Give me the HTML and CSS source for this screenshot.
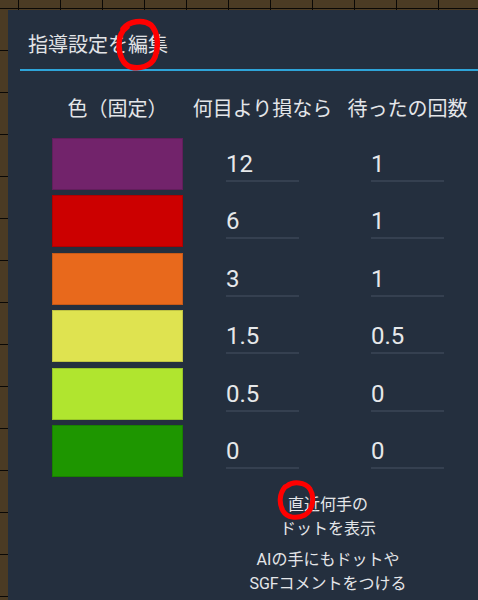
FILE: index.html
```html
<!DOCTYPE html>
<html lang="ja">
<head>
<meta charset="utf-8">
<title>指導設定を編集</title>
<link rel="stylesheet" href="styles.css">
</head>
<body>
<div class="board">
  <section class="dialog">
    <h1 class="title">指導設定を編集</h1>
    <div class="divider"></div>
    <div class="grid heads">
      <div class="head">色（固定）</div>
      <div class="head">何目より損なら</div>
      <div class="head">待ったの回数</div>
    </div>
    <div class="grid rows">
      <div class="swatch c-purple"></div><div class="field">12</div><div class="field">1</div>
      <div class="swatch c-red"></div><div class="field">6</div><div class="field">1</div>
      <div class="swatch c-orange"></div><div class="field">3</div><div class="field">1</div>
      <div class="swatch c-yellow"></div><div class="field">1.5</div><div class="field">0.5</div>
      <div class="swatch c-lime"></div><div class="field">0.5</div><div class="field">0</div>
      <div class="swatch c-green"></div><div class="field">0</div><div class="field">0</div>
    </div>
    <div class="options">
      <p class="option">直近何手の<br>ドットを表示</p>
      <p class="option">AIの手にもドットや<br>SGFコメントをつける</p>
    </div>
  </section>
  <svg class="mark mark-title" width="48" height="54" viewBox="0 0 48 54">
    <path d="M10 12 C16 4, 30 2, 38 8 C45 15, 46 30, 42 40 C38 50, 26 52, 18 50 C10 48, 6 38, 6 28 C6 20, 8 14, 14 10" fill="none" stroke="#ff0000" stroke-width="5.5" stroke-linecap="round"/>
  </svg>
  <svg class="mark mark-dot" width="44" height="44" viewBox="0 0 44 44">
    <path d="M14 8 C20 3, 32 4, 37 11 C42 19, 40 32, 32 37 C24 41, 14 40, 10 33 C6 26, 6 16, 12 9" fill="none" stroke="#ff0000" stroke-width="5" stroke-linecap="round"/>
  </svg>
</div>
</body>
</html>
```
FILE: styles.css
```css
html, body {
  margin: 0;
  padding: 0;
  width: 478px;
  height: 600px;
  overflow: hidden;
}

.board {
  position: relative;
  width: 478px;
  height: 600px;
  overflow: hidden;
  background-color: #4b3b24;
  background-image:
    linear-gradient(to right, #0a0806 1px, transparent 1px),
    linear-gradient(to bottom, #0a0806 1px, transparent 1px);
  background-size: 42px 42px, 42px 42px;
  background-position: 18px 0, 0 8px;
  padding: 10px 0 0 8px;
  box-sizing: border-box;
}

.dialog {
  width: 500px;
  height: 600px;
  background: #242f3e;
  color: #e4e6e9;
  font-family: Roboto, "Noto Sans CJK JP", sans-serif;
  padding-top: 21px;
  box-sizing: border-box;
}

.title {
  margin: 0 0 0 20px;
  font-size: 20px;
  line-height: 28px;
  font-weight: 400;
  color: #e2e4e7;
}

.divider {
  margin: 10px 0 0 12px;
  height: 2px;
  background: #2ea4d8;
}

.grid {
  display: grid;
  grid-template-columns: repeat(3, 145px);
  margin-left: 37px;
}

.heads {
  margin-top: 24px;
}

.head {
  text-align: center;
  font-size: 20px;
  line-height: 28px;
  white-space: nowrap;
}

.rows {
  margin-top: 15px;
  grid-auto-rows: 52px;
  row-gap: 5.4px;
}

.swatch {
  width: 131px;
  height: 52px;
  justify-self: center;
  box-sizing: border-box;
  border: 1px solid rgba(0, 0, 0, 0.14);
}

.c-purple { background: #72236b; }
.c-red { background: #cc0000; }
.c-orange { background: #e8691c; }
.c-yellow { background: #dfe350; }
.c-lime { background: #b0e52f; }
.c-green { background: #1e9600; }

.field {
  width: 73px;
  height: 44px;
  justify-self: center;
  align-self: start;
  box-sizing: border-box;
  padding-top: 12px;
  border-bottom: 2px solid #354050;
  font-size: 24px;
  line-height: 28px;
  color: #e6e8ea;
}

.options {
  margin: 16px 0 0 170px;
  width: 300px;
  text-align: center;
}

.option {
  margin: 0;
  font-size: 16px;
  line-height: 24px;
  color: #e4e6e9;
}

.option + .option {
  margin-top: 7px;
}

.mark {
  position: absolute;
}

.mark-title {
  left: 113px;
  top: 17px;
}

.mark-dot {
  left: 273px;
  top: 478px;
}
```
